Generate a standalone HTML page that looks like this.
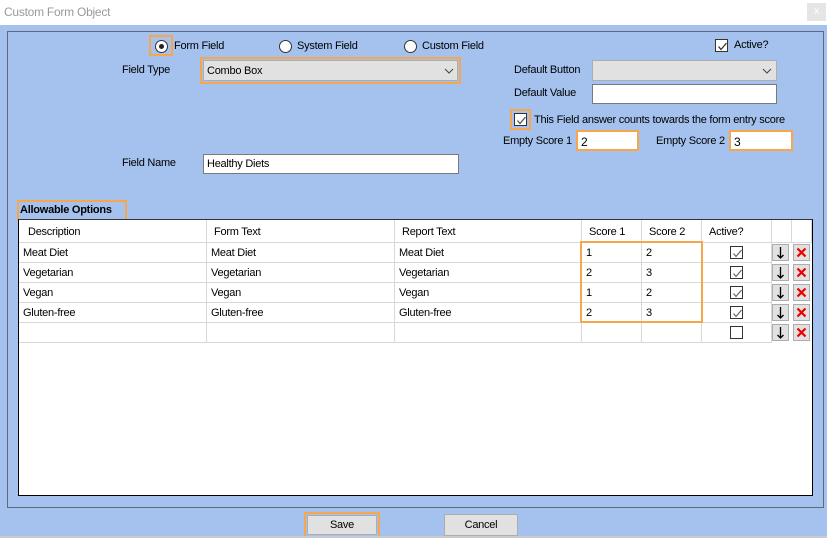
<!DOCTYPE html>
<html><head><style>
*{box-sizing:border-box;margin:0;padding:0}
body{width:827px;height:538px;overflow:hidden;background:#a4c2ed;font-family:"Liberation Sans",sans-serif;font-size:11px;letter-spacing:-0.25px;color:#000;position:relative}
.a{position:absolute;white-space:nowrap}
.title{left:0;top:0;width:827px;height:25px;background:#fff}
.inp{background:#fff;border:1px solid #7a7a7a;padding:2px 4px;height:21px}
.org{border:2px solid #f7a64b}
.radio{width:13px;height:13px;border:1px solid #333;border-radius:50%;background:#fff}
.chk{width:13px;height:13px;border:1px solid #333;background:#fff}
.chk svg{position:absolute;left:1px;top:1px}
.grid{left:18px;top:219px;width:795px;height:277px;background:#fff;border:1px solid #000;border-top:1px solid #333}
.cell{position:absolute;white-space:nowrap;border-right:1px solid #d8d8d8;border-bottom:1px solid #d8d8d8;padding:4px 4px 0 4px;height:20px}
.btn{position:absolute;width:17px;height:17px;background:#e1e1e1;border:1px solid #adadad;text-align:center}
</style></head><body>
<div class="a title"></div>
<div class="a" style="left:4px;top:5px;color:#999;font-size:12px">Custom Form Object</div>
<div class="a" style="left:807px;top:3px;width:19px;height:18px;background:#e5e5e5;color:#fff;text-align:center;font-size:10px;line-height:18px">x</div>
<div class="a" style="left:7px;top:31px;width:817px;height:477px;border:1px solid #5e6a78"></div>

<div class="a org" style="left:149px;top:35px;width:24px;height:21px"></div>
<div class="a radio" style="left:155px;top:40px"><div style="position:absolute;left:3px;top:3px;width:5px;height:5px;border-radius:50%;background:#222"></div></div>
<div class="a" style="left:174px;top:40px">Form Field</div>
<div class="a radio" style="left:279px;top:40px"></div>
<div class="a" style="left:297px;top:40px">System Field</div>
<div class="a radio" style="left:404px;top:40px"></div>
<div class="a" style="left:422px;top:40px">Custom Field</div>
<div class="a chk" style="left:715px;top:39px"><svg width="11" height="11"><path d="M1.5 5.5L4 8.5L9.5 2" stroke="#333" stroke-width="1.3" fill="none"/></svg></div>
<div class="a" style="left:734px;top:39px">Active?</div>

<div class="a" style="left:122px;top:64px">Field Type</div>
<div class="a org" style="left:200px;top:57px;width:261px;height:27px"></div>
<div class="a" style="left:203px;top:60px;width:255px;height:21px;background:#e1e1e1;border:1px solid #adadad;padding:4px 3px">Combo Box</div>
<svg class="a" style="left:444px;top:68px" width="10" height="6"><path d="M1 1L5 5L9 1" stroke="#444" fill="none"/></svg>

<div class="a" style="left:514px;top:64px">Default Button</div>
<div class="a" style="left:592px;top:60px;width:185px;height:21px;background:#e1e1e1;border:1px solid #adadad"></div>
<svg class="a" style="left:762px;top:68px" width="10" height="6"><path d="M1 1L5 5L9 1" stroke="#444" fill="none"/></svg>
<div class="a" style="left:514px;top:87px">Default Value</div>
<div class="a inp" style="left:592px;top:84px;width:185px;height:20px"></div>

<div class="a org" style="left:510px;top:109px;width:21px;height:21px"></div>
<div class="a chk" style="left:514px;top:113px"><svg width="11" height="11"><path d="M1.5 5.5L4 8.5L9.5 2" stroke="#555" stroke-width="1.3" fill="none"/></svg></div>
<div class="a" style="left:534px;top:114px">This Field answer counts towards the form entry score</div>
<div class="a" style="left:503px;top:135px">Empty Score 1</div>
<div class="a org" style="left:576px;top:130px;width:63px;height:21px;background:#fff;padding:3px 3px;font-size:12px">2</div>
<div class="a" style="left:656px;top:135px">Empty Score 2</div>
<div class="a org" style="left:729px;top:130px;width:64px;height:21px;background:#fff;padding:3px 3px;font-size:12px">3</div>

<div class="a" style="left:122px;top:157px">Field Name</div>
<div class="a inp" style="left:203px;top:154px;width:256px;height:20px;padding:3px 3px">Healthy Diets</div>

<div class="a org" style="left:17px;top:200px;width:110px;height:21px"></div>
<div class="a" style="left:20px;top:204px;font-weight:bold">Allowable Options</div>

<div class="a grid">
<div class="cell" style="left:0;top:0;width:188px;height:23px;padding-left:9px;padding-top:6px">Description</div>
<div class="cell" style="left:188px;top:0;width:188px;height:23px;padding-left:7px;padding-top:6px">Form Text</div>
<div class="cell" style="left:376px;top:0;width:187px;height:23px;padding-left:7px;padding-top:6px">Report Text</div>
<div class="cell" style="left:563px;top:0;width:60px;height:23px;padding-left:7px;padding-top:6px">Score 1</div>
<div class="cell" style="left:623px;top:0;width:60px;height:23px;padding-left:7px;padding-top:6px">Score 2</div>
<div class="cell" style="left:683px;top:0;width:70px;height:23px;padding-left:7px;padding-top:6px">Active?</div>
<div class="cell" style="left:753px;top:0;width:20px;height:23px"></div>
<div class="cell" style="left:773px;top:0;width:20px;height:23px"></div>
</div>
<div class="a" style="left:19px;top:243px">
<div class="cell" style="left:0;top:0;width:188px">Meat Diet</div><div class="cell" style="left:188px;top:0;width:188px">Meat Diet</div><div class="cell" style="left:376px;top:0;width:187px">Meat Diet</div><div class="cell" style="left:563px;top:0;width:60px">1</div><div class="cell" style="left:623px;top:0;width:60px">2</div><div class="cell" style="left:683px;top:0;width:70px"></div>
<div class="cell" style="left:0;top:20px;width:188px">Vegetarian</div><div class="cell" style="left:188px;top:20px;width:188px">Vegetarian</div><div class="cell" style="left:376px;top:20px;width:187px">Vegetarian</div><div class="cell" style="left:563px;top:20px;width:60px">2</div><div class="cell" style="left:623px;top:20px;width:60px">3</div><div class="cell" style="left:683px;top:20px;width:70px"></div>
<div class="cell" style="left:0;top:40px;width:188px">Vegan</div><div class="cell" style="left:188px;top:40px;width:188px">Vegan</div><div class="cell" style="left:376px;top:40px;width:187px">Vegan</div><div class="cell" style="left:563px;top:40px;width:60px">1</div><div class="cell" style="left:623px;top:40px;width:60px">2</div><div class="cell" style="left:683px;top:40px;width:70px"></div>
<div class="cell" style="left:0;top:60px;width:188px">Gluten-free</div><div class="cell" style="left:188px;top:60px;width:188px">Gluten-free</div><div class="cell" style="left:376px;top:60px;width:187px">Gluten-free</div><div class="cell" style="left:563px;top:60px;width:60px">2</div><div class="cell" style="left:623px;top:60px;width:60px">3</div><div class="cell" style="left:683px;top:60px;width:70px"></div>
<div class="cell" style="left:0;top:80px;width:188px"></div><div class="cell" style="left:188px;top:80px;width:188px"></div><div class="cell" style="left:376px;top:80px;width:187px"></div><div class="cell" style="left:563px;top:80px;width:60px"></div><div class="cell" style="left:623px;top:80px;width:60px"></div><div class="cell" style="left:683px;top:80px;width:70px"></div>
</div>
<div class="a org" style="left:580px;top:241px;width:123px;height:82px"></div>

<div class="a chk" style="left:730px;top:246px"><svg width="11" height="11"><path d="M1.5 5.5L4 8.5L9.5 2" stroke="#666" stroke-width="1.2" fill="none"/></svg></div>
<div class="a chk" style="left:730px;top:266px"><svg width="11" height="11"><path d="M1.5 5.5L4 8.5L9.5 2" stroke="#666" stroke-width="1.2" fill="none"/></svg></div>
<div class="a chk" style="left:730px;top:286px"><svg width="11" height="11"><path d="M1.5 5.5L4 8.5L9.5 2" stroke="#666" stroke-width="1.2" fill="none"/></svg></div>
<div class="a chk" style="left:730px;top:306px"><svg width="11" height="11"><path d="M1.5 5.5L4 8.5L9.5 2" stroke="#666" stroke-width="1.2" fill="none"/></svg></div>
<div class="a chk" style="left:730px;top:326px"></div>

<div class="a" style="left:772px;top:244px">
<div class="btn" style="left:0;top:0"><svg width="15" height="15"><path d="M7.5 2V13M4.5 10L7.5 13L10.5 10" stroke="#000" stroke-width="1.3" fill="none"/></svg></div>
<div class="btn" style="left:21px;top:0"><svg width="15" height="15"><path d="M3.5 3.5L11.5 11.5M11.5 3.5L3.5 11.5" stroke="#e00" stroke-width="2.2"/></svg></div>
<div class="btn" style="left:0;top:20px"><svg width="15" height="15"><path d="M7.5 2V13M4.5 10L7.5 13L10.5 10" stroke="#000" stroke-width="1.3" fill="none"/></svg></div>
<div class="btn" style="left:21px;top:20px"><svg width="15" height="15"><path d="M3.5 3.5L11.5 11.5M11.5 3.5L3.5 11.5" stroke="#e00" stroke-width="2.2"/></svg></div>
<div class="btn" style="left:0;top:40px"><svg width="15" height="15"><path d="M7.5 2V13M4.5 10L7.5 13L10.5 10" stroke="#000" stroke-width="1.3" fill="none"/></svg></div>
<div class="btn" style="left:21px;top:40px"><svg width="15" height="15"><path d="M3.5 3.5L11.5 11.5M11.5 3.5L3.5 11.5" stroke="#e00" stroke-width="2.2"/></svg></div>
<div class="btn" style="left:0;top:60px"><svg width="15" height="15"><path d="M7.5 2V13M4.5 10L7.5 13L10.5 10" stroke="#000" stroke-width="1.3" fill="none"/></svg></div>
<div class="btn" style="left:21px;top:60px"><svg width="15" height="15"><path d="M3.5 3.5L11.5 11.5M11.5 3.5L3.5 11.5" stroke="#e00" stroke-width="2.2"/></svg></div>
<div class="btn" style="left:0;top:80px"><svg width="15" height="15"><path d="M7.5 2V13M4.5 10L7.5 13L10.5 10" stroke="#000" stroke-width="1.3" fill="none"/></svg></div>
<div class="btn" style="left:21px;top:80px"><svg width="15" height="15"><path d="M3.5 3.5L11.5 11.5M11.5 3.5L3.5 11.5" stroke="#e00" stroke-width="2.2"/></svg></div>
</div>

<div class="a org" style="left:304px;top:512px;width:76px;height:26px"></div>
<div class="a" style="left:307px;top:515px;width:70px;height:20px;background:#e1e1e1;border:1px solid #adadad;text-align:center;line-height:18px">Save</div>
<div class="a" style="left:444px;top:514px;width:74px;height:22px;background:#e1e1e1;border:1px solid #adadad;text-align:center;line-height:20px">Cancel</div>
<div class="a" style="left:0;top:536px;width:827px;height:2px;background:#c8ccd2"></div>
</body></html>
